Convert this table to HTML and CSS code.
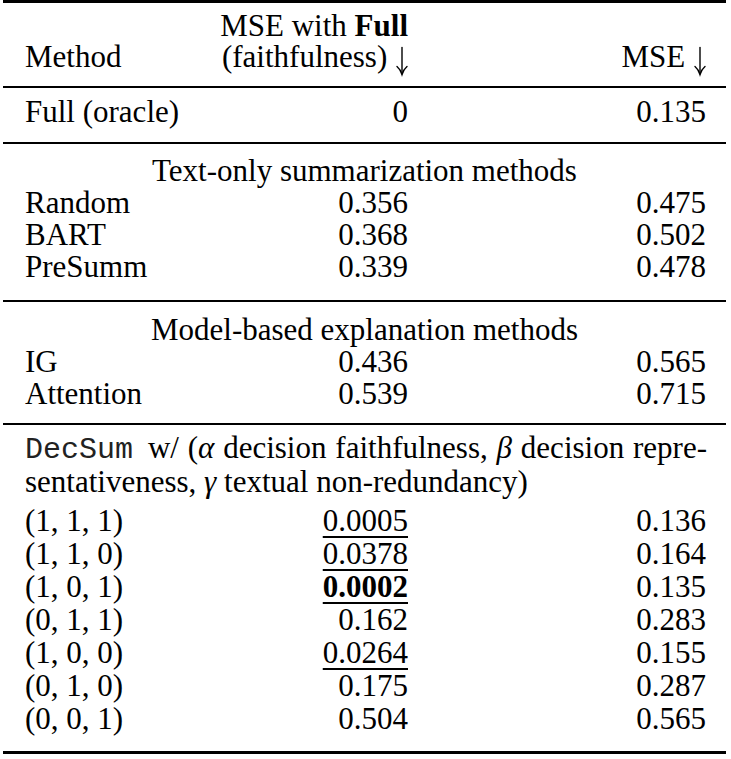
FILE: index.html
```html
<!DOCTYPE html>
<html lang="en">
<head>
<meta charset="utf-8">
<title>Results table</title>
<link rel="stylesheet" href="styles.css">
</head>
<body>
<table class="results">
  <colgroup>
    <col class="c-method">
    <col class="c-faith">
    <col class="c-mse">
  </colgroup>
  <thead>
    <tr>
      <th class="method">Method</th>
      <th class="num"><span class="hline">MSE with <b>Full</b></span><span class="hline">(faithfulness) <svg class="arrow" viewBox="0 0 12 28" width="12" height="28" aria-label="lower is better"><path d="M6 0.5V27" /><path d="M1 19.5Q4.6 22.6 6 27.5Q7.4 22.6 11 19.5" /></svg></span></th>
      <th class="num">MSE <svg class="arrow" viewBox="0 0 12 28" width="12" height="28" aria-label="lower is better"><path d="M6 0.5V27" /><path d="M1 19.5Q4.6 22.6 6 27.5Q7.4 22.6 11 19.5" /></svg></th>
    </tr>
  </thead>
  <tbody class="sec sec-oracle">
    <tr><td class="method">Full (oracle)</td><td class="num">0</td><td class="num">0.135</td></tr>
  </tbody>
  <tbody class="sec sec-text">
    <tr><td class="group" colspan="3">Text-only summarization methods</td></tr>
    <tr><td class="method">Random</td><td class="num">0.356</td><td class="num">0.475</td></tr>
    <tr><td class="method">BART</td><td class="num">0.368</td><td class="num">0.502</td></tr>
    <tr><td class="method">PreSumm</td><td class="num">0.339</td><td class="num">0.478</td></tr>
  </tbody>
  <tbody class="sec sec-model">
    <tr><td class="group" colspan="3">Model-based explanation methods</td></tr>
    <tr><td class="method">IG</td><td class="num">0.436</td><td class="num">0.565</td></tr>
    <tr><td class="method">Attention</td><td class="num">0.539</td><td class="num">0.715</td></tr>
  </tbody>
  <tbody class="sec sec-decsum">
    <tr>
      <td class="desc" colspan="3">
        <div class="just"><span class="tt">DecSum</span> w/ (<i>α</i> decision faithfulness, <i>β</i> decision repre-</div>
        <div>sentativeness, <i>γ</i> textual non-redundancy)</div>
      </td>
    </tr>
    <tr><td class="method">(1, 1, 1)</td><td class="num"><span class="ul">0.0005</span></td><td class="num">0.136</td></tr>
    <tr><td class="method">(1, 1, 0)</td><td class="num"><span class="ul">0.0378</span></td><td class="num">0.164</td></tr>
    <tr><td class="method">(1, 0, 1)</td><td class="num"><span class="ul best">0.0002</span></td><td class="num">0.135</td></tr>
    <tr><td class="method">(0, 1, 1)</td><td class="num">0.162</td><td class="num">0.283</td></tr>
    <tr><td class="method">(1, 0, 0)</td><td class="num"><span class="ul">0.0264</span></td><td class="num">0.155</td></tr>
    <tr><td class="method">(0, 1, 0)</td><td class="num">0.175</td><td class="num">0.287</td></tr>
    <tr><td class="method">(0, 0, 1)</td><td class="num">0.504</td><td class="num">0.565</td></tr>
  </tbody>
</table>
</body>
</html>
```

FILE: styles.css
```css
html,
body {
  margin: 0;
  padding: 0;
  background: #ffffff;
}

body {
  font-family: "Liberation Serif", "Times New Roman", "DejaVu Serif", serif;
  font-size: 31px;
  color: #000000;
}

.results {
  margin: 0 0 0 3px;
  width: 723px;
  table-layout: fixed;
  border-collapse: separate;
  border-spacing: 0;
  border-top: 3px solid #000000;
  border-bottom: 3px solid #000000;
}

.c-method { width: 200px; }
.c-faith { width: 225px; }
.c-mse { width: 298px; }

th,
td {
  padding: 0;
  font-weight: normal;
  white-space: nowrap;
}

/* header */
thead th {
  line-height: 31px;
  padding-top: 7px;
  padding-bottom: 14px;
  vertical-align: bottom;
}

.hline {
  display: block;
}

.arrow {
  display: inline-block;
  width: 12px;
  height: 28px;
  vertical-align: -4px;
  margin-bottom: -4px;
  margin-left: 1px;
  overflow: visible;
}

.arrow path {
  fill: none;
  stroke: #000000;
  stroke-width: 1.4;
  stroke-linecap: round;
}

/* body rows */
td {
  line-height: 32px;
}

.sec > tr:first-child > td {
  border-top: 2px solid #000000;
}

.sec-oracle td {
  padding-top: 8px;
  padding-bottom: 14px;
}

.sec-text > tr:first-child > td {
  padding-top: 11px;
}

.sec-text > tr:last-child > td {
  padding-bottom: 17px;
}

.sec-model > tr:first-child > td {
  padding-top: 12px;
}

.sec-model > tr:last-child > td {
  padding-bottom: 13px;
}

.sec-decsum td {
  line-height: 33px;
}

.sec-decsum > tr:first-child > td {
  padding-top: 7px;
  padding-bottom: 6px;
  line-height: 32px;
}

.sec-decsum > tr:last-child > td {
  padding-bottom: 16px;
}

.method {
  text-align: left;
  padding-left: 22px;
}

.num {
  text-align: right;
  padding-right: 20px;
}

.group {
  text-align: center;
}

.desc {
  white-space: normal;
  padding-left: 22px;
  padding-right: 19px;
}

.just {
  text-align: justify;
  text-align-last: justify;
}

.tt {
  font-family: "Liberation Mono", "Courier New", monospace;
  font-size: 30px;
  color: #222222;
  margin-right: 6px;
}

.ul {
  text-decoration: underline;
  text-decoration-thickness: 1.5px;
  text-underline-offset: 5px;
}

.best {
  font-weight: bold;
}
```
